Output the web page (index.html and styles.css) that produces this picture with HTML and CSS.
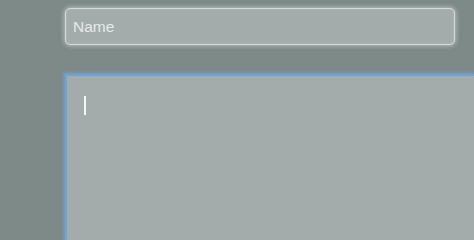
FILE: index.html
```html
<!DOCTYPE html>
<html>
<head>
<meta charset="utf-8">
<link rel="stylesheet" href="styles.css">
</head>
<body>
<div class="form">
  <div class="field name-field"><span class="placeholder">Name</span></div>
  <div class="field message-field"><span class="caret"></span></div>
</div>
</body>
</html>
```
FILE: styles.css
```css
html, body {
  margin: 0;
  padding: 0;
  height: 100%;
  overflow: hidden;
  background: #7e8a88;
  font-family: "Liberation Sans", Arial, sans-serif;
}
.form {
  box-sizing: border-box;
  height: 100%;
  display: flex;
  flex-direction: column;
  padding: 8px 0 0 65px;
}
.field {
  box-sizing: border-box;
  background: #a3acab;
}
.name-field {
  flex: none;
  width: 390px;
  height: 37px;
  border: 1px solid #d5dad9;
  border-radius: 5px;
  box-shadow: 0 0 4px 1px rgba(235, 240, 238, 0.5), inset 0 0 2px rgba(255,255,255,0.3);
  display: flex;
  align-items: center;
  padding-left: 7px;
}
.placeholder {
  color: #e6eae9;
  font-size: 15.5px;
  line-height: 1;
  margin-top: 1px;
}
.message-field {
  flex: 1;
  margin-top: 29px;
  border: 2px solid #6fa4d9;
  border-right: none;
  border-bottom: none;
  box-shadow: -1px -1px 2px 1px rgba(111, 164, 217, 0.6);
  padding: 20px 0 0 17px;
}
.caret {
  display: block;
  width: 2px;
  height: 19px;
  background: #f4f6f6;
}
```
